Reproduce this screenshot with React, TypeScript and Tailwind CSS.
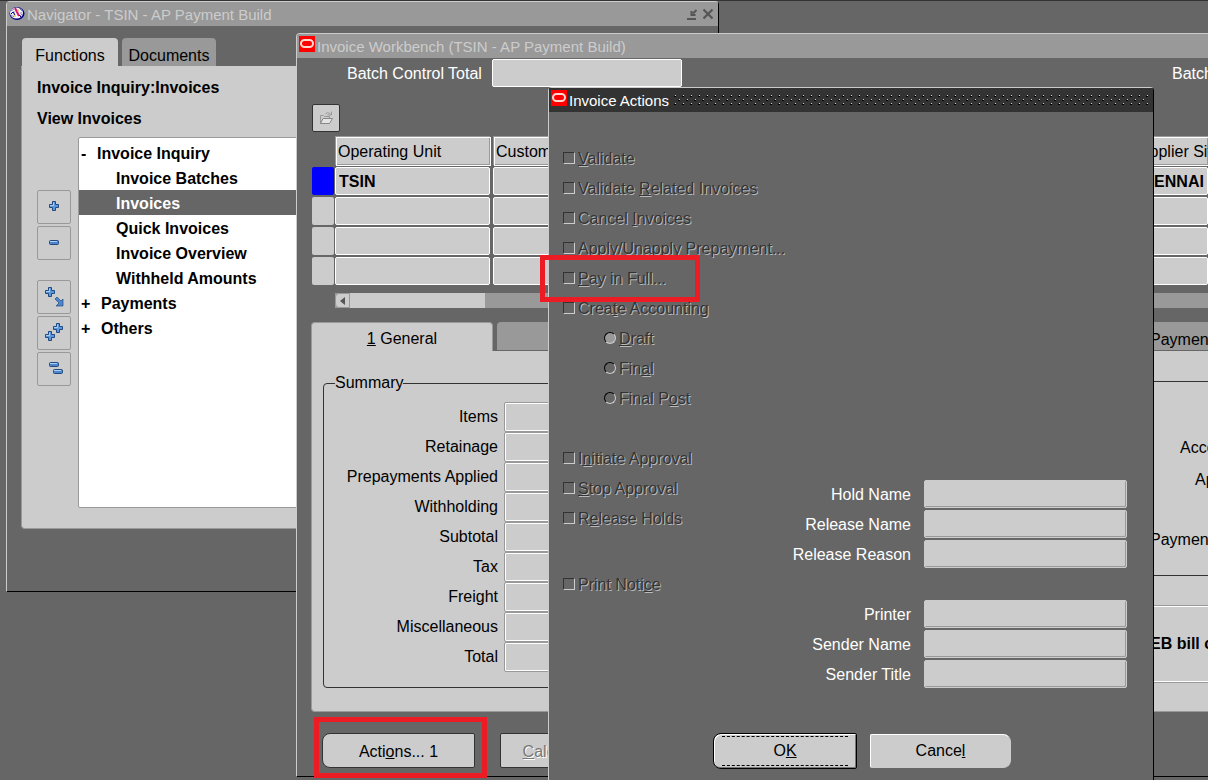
import { ReactNode, useState } from 'react';
import clsx from 'clsx';

type TreeNode = {
    label: string;
    sign?: '-' | '+';
};

type FieldProps = {
    id: string;
    label: string;
};

type Action = {
    id: string;
    label: ReactNode;
};

const treeNodes: TreeNode[] = [
    { label: 'Invoice Inquiry', sign: '-' },
    { label: 'Invoice Batches' },
    { label: 'Invoices' },
    { label: 'Quick Invoices' },
    { label: 'Invoice Overview' },
    { label: 'Withheld Amounts' },
    { label: 'Payments', sign: '+' },
    { label: 'Others', sign: '+' },
];

const invoiceActions: Action[] = [
    { id: 'validate', label: <><u>V</u>alidate</> },
    { id: 'validate-related', label: <>Validate <u>R</u>elated Invoices</> },
    { id: 'cancel-invoices', label: <>Cancel <u>I</u>nvoices</> },
    { id: 'prepayment', label: <>Apply/Unapply Prepayment...</> },
    { id: 'pay-in-full', label: <><u>P</u>ay in Full...</> },
    { id: 'accounting', label: <>Crea<u>t</u>e Accounting</> },
];

const accountingModes: Action[] = [
    { id: 'draft', label: <><u>D</u>raft</> },
    { id: 'final', label: <>Fin<u>a</u>l</> },
    { id: 'final-post', label: <>Final P<u>o</u>st</> },
];

const approvalActions: Action[] = [
    { id: 'initiate', label: <>I<u>n</u>itiate Approval</> },
    { id: 'stop', label: <><u>S</u>top Approval</> },
    { id: 'release', label: <>R<u>e</u>lease Holds</> },
];

const summaryFields = [
    'Items',
    'Retainage',
    'Prepayments Applied',
    'Withholding',
    'Subtotal',
    'Tax',
    'Freight',
    'Miscellaneous',
    'Total',
];

const invoiceRows = [
    { unit: 'TSIN', customer: '', site: 'CHENNAI' },
    { unit: '', customer: '', site: '' },
    { unit: '', customer: '', site: '' },
    { unit: '', customer: '', site: '' },
];

const OracleMark = () => (
    <svg
        className="mb-1"
        width="16"
        height="16"
        viewBox="0 0 16 16"
        aria-hidden="true"
    >
        <rect width="16" height="16" fill="#ff0000" />
        <rect
            x="2"
            y="4"
            width="12"
            height="7"
            rx="3.5"
            fill="none"
            stroke="#ffd9d0"
            strokeWidth="2"
        />
    </svg>
);

const NavigatorMark = () => (
    <svg width="16" height="16" viewBox="0 0 16 16" aria-hidden="true">
        <ellipse cx="8" cy="7.5" rx="7.5" ry="6.5" fill="#000080" />
        <ellipse cx="7.5" cy="7" rx="6.5" ry="5.5" fill="#f4f4ff" />
        <path
            d="M2 5l3-2M10 2l3 3M2 9l3 2M11 10l2-2M4 6h2M11 7h2"
            stroke="#8484b0"
        />
        <path d="M6 2l4 8" stroke="#e0106a" strokeWidth="2" />
        <path d="M9 3v3M5 7v3h2" stroke="#d4c020" fill="none" />
        <path d="M2 8l2-2 2 3M10 9l2 2" stroke="#000080" fill="none" />
    </svg>
);

const Plus = ({ x, y }: { x: number; y: number }) => (
    <g transform={`translate(${x} ${y})`}>
        <path
            d="M3.5.5h3v3h3v3h-3v3h-3v-3h-3v-3h3z"
            fill="#5b98dc"
            stroke="#234a80"
        />
        <path d="M4.5 1.5v3h-3.500" stroke="#a8d0f8" fill="none" />
    </g>
);

const Minus = ({ x, y }: { x: number; y: number }) => (
    <g transform={`translate(${x} ${y})`}>
        <rect
            x=".5"
            y=".5"
            width="9"
            height="4"
            rx="1"
            fill="#4d86cc"
            stroke="#234a80"
        />
        <path d="M1 1.500h7" stroke="#a8d0f8" />
    </g>
);

const toolIcons: { name: string; icon: ReactNode }[] = [
    { name: 'Expand', icon: <Plus x={11} y={10} /> },
    { name: 'Collapse', icon: <Minus x={11} y={13} /> },
    {
        name: 'Expand branch',
        icon: (
            <>
                <Plus x={7} y={6} />
                <path
                    d="M17 18l2-2 4 4 2-2v7h-7l3-3z"
                    fill="#4d86cc"
                    stroke="#234a80"
                    strokeWidth=".7"
                />
            </>
        ),
    },
    {
        name: 'Expand all',
        icon: (
            <>
                <Plus x={15} y={6} />
                <Plus x={7} y={14} />
            </>
        ),
    },
    {
        name: 'Collapse all',
        icon: (
            <>
                <Minus x={11} y={9} />
                <Minus x={15} y={16} />
            </>
        ),
    },
];

const TitleGrip = () => (
    <svg className="h-3 flex-1" aria-hidden="true">
        <defs>
            <pattern
                id="grip"
                width="8"
                height="8"
                patternUnits="userSpaceOnUse"
            >
                <path d="M1 1h1v1h-1zM5 5h1v1h-1z" fill="#ccc" />
                <path
                    d="M0 2h1v1h-1zM1 2h1v1h-1zM4 6h1v1h-1zM5 6h1v1h-1z"
                    fill="#000"
                />
            </pattern>
        </defs>
        <rect width="100%" height="100%" fill="url(#grip)" />
    </svg>
);

const ActionCheck = ({ id, label }: Action) => (
    <div className="flex h-[30px] items-center gap-[3px]">
        <input
            id={id}
            type="checkbox"
            disabled
            className="size-3 appearance-none border border-t-[#333] border-l-[#333] border-r-[#ccc] border-b-[#ccc]"
        />
        <label
            htmlFor={id}
            className="pt-0.5 whitespace-nowrap text-[#333] [text-shadow:1px_1px_0_#bbb]"
        >
            {label}
        </label>
    </div>
);

const ModalField = ({ id, label }: FieldProps) => (
    <div className="flex h-[30px] items-center justify-end gap-[13px]">
        <label htmlFor={id} className="pt-0.5">
            {label}
        </label>
        <input
            id={id}
            className="h-7 w-[203px] rounded-xs border border-[#ccc] bg-[#ccc] shadow-[inset_-1px_-1px_0_#999] outline-none"
        />
    </div>
);

const cellClass =
    'block h-7 w-full rounded-xs border border-white bg-[#ccc] px-[3px] pt-0.5 font-bold text-black outline-none';

const headClass =
    'flex h-[29px] items-center overflow-hidden border-t border-l border-[#999] bg-[#ccc] pt-px pl-0.5 font-normal text-black shadow-[inset_1px_1px_0_#fff,inset_-1px_-1px_0_#999,1px_1px_0_#fff]';

const Navigator = () => {
    const [selected, setSelected] = useState('Invoices');

    return (
        <section className="absolute top-px left-1.5 flex h-[591px] w-[713px] flex-col rounded-t-sm border border-t-[#ccc] border-r-black border-b-black border-l-[#ccc] bg-[#666]">
            <header className="flex h-6 shrink-0 items-center bg-[#999] pr-1 pl-0.5 text-[15px] text-[#ccc]">
                <NavigatorMark />
                <h1 className="ml-0.5 flex-1 pt-0.5">
                    Navigator - TSIN - AP Payment Build
                </h1>
                <button type="button" aria-label="Minimize">
                    <svg width="12" height="12" viewBox="0 0 12 12">
                        <path
                            d="M1 11h9M10.500 2L7 5.500M5.500 3v4h4"
                            stroke="#555"
                            strokeWidth="2"
                            fill="none"
                        />
                    </svg>
                </button>
                <button type="button" aria-label="Close" className="ml-1">
                    <svg width="12" height="12" viewBox="0 0 12 12">
                        <path
                            d="M1.500 1.500l9 9M10.500 1.500l-9 9"
                            stroke="#555"
                            strokeWidth="2.200"
                        />
                    </svg>
                </button>
            </header>
            <div className="mt-3 flex gap-1 px-[15px] text-black">
                <button
                    type="button"
                    className="h-7 w-24 rounded-t-sm bg-[#ccc] pt-1.5"
                >
                    Functions
                </button>
                <button
                    type="button"
                    className="h-7 w-[94px] rounded-t-sm bg-[#999] pt-1.5"
                >
                    Documents
                </button>
            </div>
            <div className="mx-3.5 flex h-[463px] flex-col rounded-b-sm border border-[#999] border-t-[#ccc] bg-[#ccc] pr-4 pb-5 pl-[15px] font-bold text-black">
                <p className="mt-[11px] leading-5">Invoice Inquiry:Invoices</p>
                <p className="mt-[11px] leading-5">View Invoices</p>
                <div className="mt-2 flex min-h-0 flex-1 gap-[7px]">
                    <div className="flex flex-col gap-0.5 pt-[53px]">
                        {toolIcons.map((tool, i) => (
                            <button
                                key={tool.name}
                                type="button"
                                aria-label={tool.name}
                                className={clsx(
                                    'size-[34px] rounded-xs border border-[#999]',
                                    i === 2 && 'mt-[18px]'
                                )}
                            >
                                <svg
                                    width="32"
                                    height="32"
                                    viewBox="0 0 32 32"
                                >
                                    {tool.icon}
                                </svg>
                            </button>
                        ))}
                    </div>
                    <ul className="flex-1 rounded-xs border border-[#999] bg-white pt-0.5">
                        {treeNodes.map(({ label, sign }) => (
                            <li key={label}>
                                <button
                                    type="button"
                                    onClick={() => setSelected(label)}
                                    className={clsx(
                                        'flex h-[25px] w-full items-center pt-0.5 pl-0.5 text-left',
                                        label === selected &&
                                            'bg-[#666] text-white'
                                    )}
                                >
                                    {sign && (
                                        <span
                                            className={
                                                sign === '-' ? 'w-4' : 'w-5'
                                            }
                                        >
                                            {sign}
                                        </span>
                                    )}
                                    <span className={sign ? '' : 'pl-[35px]'}>
                                        {label}
                                    </span>
                                </button>
                            </li>
                        ))}
                    </ul>
                </div>
            </div>
        </section>
    );
};

const Workbench = () => (
    <section className="absolute top-[33px] right-0 left-[296px] flex h-[744px] flex-col overflow-hidden rounded-tl-sm border-t border-b border-l border-t-[#ccc] border-b-black border-l-[#ccc] bg-[#666]">
        <header className="flex h-6 shrink-0 items-center bg-[#999] pl-0.5 text-[15px] text-[#ccc]">
            <OracleMark />
            <h2 className="ml-0.5 pt-0.5">
                Invoice Workbench (TSIN - AP Payment Build)
            </h2>
        </header>
        <div className="mt-px flex h-7 items-center pl-[50px] text-white">
            <label htmlFor="batch-total" className="mr-2.5 pt-0.5">
                Batch Control Total
            </label>
            <input
                id="batch-total"
                className="h-7 w-[190px] rounded-xs border border-white bg-[#ccc] outline-none"
            />
            <span className="ml-auto w-9 pt-0.5 whitespace-nowrap">
                Batch Total
            </span>
        </div>
        <button
            type="button"
            aria-label="Open folder"
            className="mt-[17px] ml-[15px] flex size-7 shrink-0 items-center justify-center rounded-xs border border-[#333] bg-[#ccc]"
        >
            <svg width="14" height="14" viewBox="0 0 14 14" fill="none">
                <path d="M1.500 12.500v-8h3l1 1h5v2" stroke="#999" />
                <path
                    d="M1.500 12.500l2.500-5h9.500l-3 5z"
                    fill="#e4e4e4"
                    stroke="#888"
                />
                <path d="M6.500 3q2-3 5 0M12.500.5v3.500h-4" stroke="#999" />
            </svg>
        </button>
        <table className="mt-1 ml-[15px] w-[calc(100%-15px)] table-fixed border-collapse text-left">
            <thead>
                <tr>
                    <th className="w-[23px] p-0" aria-label="Current record" />
                    <th className="w-[158px] p-0 pr-[3px] pb-0.5">
                        <div className={headClass}>Operating Unit</div>
                    </th>
                    <th className="p-0 pr-1 pb-0.5">
                        <div className={headClass}>Customer Name</div>
                    </th>
                    <th className="w-[81px] p-0 pb-0.5">
                        <div className={clsx(headClass, 'whitespace-nowrap')}>
                            Supplier Site
                        </div>
                    </th>
                </tr>
            </thead>
            <tbody>
                {invoiceRows.map((row, i) => (
                    <tr key={i}>
                        <td className="p-0 pr-px pb-0.5">
                            <div
                                className={clsx(
                                    'h-7 rounded-xs',
                                    i === 0 ? 'bg-[#0000ff]' : 'bg-[#ccc]'
                                )}
                            />
                        </td>
                        <td className="p-0 pr-[3px] pb-0.5">
                            <input
                                aria-label="Operating Unit"
                                defaultValue={row.unit}
                                className={cellClass}
                            />
                        </td>
                        <td className="p-0 pr-1 pb-0.5">
                            <input
                                aria-label="Customer Name"
                                defaultValue={row.customer}
                                className={cellClass}
                            />
                        </td>
                        <td className="p-0 pb-0.5">
                            <input
                                aria-label="Supplier Site"
                                defaultValue={row.site}
                                className={cellClass}
                            />
                        </td>
                    </tr>
                ))}
            </tbody>
        </table>
        <div className="mt-1.5 ml-[38px] flex h-[15px] shrink-0 bg-[#999]">
            <button
                type="button"
                aria-label="Scroll left"
                className="flex w-[15px] items-center justify-center rounded-l-sm border border-[#999] bg-[#ccc]"
            >
                <svg width="5" height="8" viewBox="0 0 5 8">
                    <path d="M5 0v8L0 4z" fill="#555" />
                </svg>
            </button>
            <div className="w-[135px] bg-[#ccc]" />
        </div>
        <div className="mt-3.5 ml-3.5 flex gap-1 text-black">
            <button
                type="button"
                className="h-[29px] w-[182px] rounded-t-sm border border-b-0 border-[#999] bg-[#ccc] pt-1"
            >
                <u>1</u> General
            </button>
            <div className="flex h-7 min-w-0 flex-1 rounded-tl-sm bg-[#999]">
                <button
                    type="button"
                    className="ml-auto w-[58px] pt-1.5 text-left whitespace-nowrap"
                >
                    Payments
                </button>
            </div>
        </div>
        <div className="ml-3.5 flex h-[361px] shrink-0 rounded-bl-sm border-b border-l border-[#999] bg-[#ccc] text-black">
            <fieldset className="mt-[18px] ml-[11px] h-[319px] w-[250px] rounded-sm border border-[#333] pl-[11px]">
                <legend className="leading-7">Summary</legend>
                <div className="mt-[5px] flex flex-col">
                    {summaryFields.map((name) => (
                        <div
                            key={name}
                            className="flex h-[30px] items-center gap-1.5"
                        >
                            <label
                                htmlFor={name}
                                className="w-[163px] text-right whitespace-nowrap"
                            >
                                {name}
                            </label>
                            <input
                                id={name}
                                className="h-[30px] min-w-0 flex-1 rounded-xs border border-[#999] bg-[#ccc] shadow-[inset_0_0_0_1px_#fff] outline-none"
                            />
                        </div>
                    ))}
                </div>
            </fieldset>
            <div className="mt-[30px] ml-5 min-w-0 flex-1">
                <div className="flex h-[195px] flex-col items-end border-y border-[#333] pt-[54px]">
                    <span className="w-7 leading-6 whitespace-nowrap">
                        Accounted
                    </span>
                    <span className="mt-2 w-[13px] leading-6 whitespace-nowrap">
                        Approval
                    </span>
                    <span className="mt-9 w-[58px] leading-6 whitespace-nowrap">
                        Payment
                    </span>
                </div>
                <div className="mt-[29px] flex h-[78px] items-center justify-end border-y border-[#999] font-bold shadow-[inset_0_1px_0_#fff,inset_0_-1px_0_#fff]">
                    <span className="w-[58px] whitespace-nowrap">
                        EB bill charges
                    </span>
                </div>
            </div>
        </div>
        <div className="mt-[21px] flex gap-[25px] pl-[25px]">
            <button
                type="button"
                className="h-[35px] w-[153px] rounded-l-lg rounded-r-xs border border-[#333] bg-[#ccc] pt-0.5 text-black"
            >
                Acti<u>o</u>ns... 1
            </button>
            <button
                type="button"
                disabled
                className="h-[35px] w-[141px] rounded-xs border border-[#333] bg-[#ccc] pt-0.5 text-[#777] [text-shadow:1px_1px_0_#fff]"
            >
                <u>C</u>alculate Tax
            </button>
        </div>
    </section>
);

const InvoiceActions = () => (
    <section
        role="dialog"
        aria-label="Invoice Actions"
        className="absolute top-[87px] -bottom-1 left-[548px] w-[606px] rounded-t-sm border border-t-[#ccc] border-r-black border-b-black border-l-[#ccc] bg-[#666]"
    >
        <header className="flex h-6 items-center bg-[#333] pr-1 pl-0.5 text-[15px] text-white">
            <OracleMark />
            <h2 className="ml-0.5 w-[105px] pt-0.5">Invoice Actions</h2>
            <TitleGrip />
        </header>
        <div className="flex justify-between pr-[26px] pl-3.5">
            <div className="pt-[31px]">
                {invoiceActions.map((action) => (
                    <ActionCheck key={action.id} {...action} />
                ))}
                {accountingModes.map(({ id, label }) => (
                    <div
                        key={id}
                        className="flex h-[30px] items-center gap-[3px] pl-[41px]"
                    >
                        <input
                            id={id}
                            type="radio"
                            name="accounting-mode"
                            disabled
                            defaultChecked={id === 'draft'}
                            className="size-3 appearance-none rounded-full border border-t-black border-l-black border-r-[#ccc] border-b-[#ccc] checked:bg-[#999]"
                        />
                        <label
                            htmlFor={id}
                            className="pt-0.5 text-[#333] [text-shadow:1px_1px_0_#bbb]"
                        >
                            {label}
                        </label>
                    </div>
                ))}
                <div className="mt-[30px] mb-9">
                    {approvalActions.map((action) => (
                        <ActionCheck key={action.id} {...action} />
                    ))}
                </div>
                <ActionCheck id="notice" label={<>Print Noti<u>c</u>e</>} />
            </div>
            <div className="flex flex-col gap-[30px] pt-[367px] text-white">
                <div>
                    <ModalField id="hold-name" label="Hold Name" />
                    <ModalField id="release-name" label="Release Name" />
                    <ModalField id="release-reason" label="Release Reason" />
                </div>
                <div>
                    <ModalField id="printer" label="Printer" />
                    <ModalField id="sender-name" label="Sender Name" />
                    <ModalField id="sender-title" label="Sender Title" />
                </div>
            </div>
        </div>
        <div className="mt-11 flex items-center gap-[13px] pl-[164px] text-black">
            <button
                type="button"
                className="h-9 w-36 rounded-l-lg rounded-r-xs border border-black bg-[#ccc] px-2 py-0.5 shadow-[inset_1px_1px_0_#fff,inset_-1px_-1px_0_#777]"
            >
                <span className="flex h-full items-center justify-center border-y border-dashed border-black">
                    O<u>K</u>
                </span>
            </button>
            <button
                type="button"
                className="h-[34px] w-[141px] rounded-l-xs rounded-r-lg border border-t-white border-r-[#ccc] border-b-[#ccc] border-l-white bg-[#ccc]"
            >
                Cance<u>l</u>
            </button>
        </div>
    </section>
);

export default function App() {
    return (
        <main className="relative h-screen overflow-hidden bg-[#666] font-['Liberation_Sans',Arial,sans-serif] text-base shadow-[inset_0_1px_0_#333]">
            <Navigator />
            <Workbench />
            <InvoiceActions />
            <div className="pointer-events-none absolute top-[255px] left-[540px] h-[47px] w-40 border-5 border-[#ed1c24]" />
            <div className="pointer-events-none absolute top-[717px] left-[314px] h-[61px] w-[173px] border-5 border-[#ed1c24]" />
        </main>
    );
}
